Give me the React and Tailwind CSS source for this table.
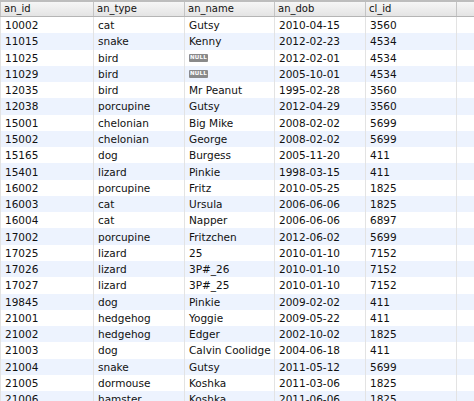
import React from 'react';

const rows = [
  ['10002', 'cat', 'Gutsy', '2010-04-15', '3560'],
  ['11015', 'snake', 'Kenny', '2012-02-23', '4534'],
  ['11025', 'bird', null, '2012-02-01', '4534'],
  ['11029', 'bird', null, '2005-10-01', '4534'],
  ['12035', 'bird', 'Mr Peanut', '1995-02-28', '3560'],
  ['12038', 'porcupine', 'Gutsy', '2012-04-29', '3560'],
  ['15001', 'chelonian', 'Big Mike', '2008-02-02', '5699'],
  ['15002', 'chelonian', 'George', '2008-02-02', '5699'],
  ['15165', 'dog', 'Burgess', '2005-11-20', '411'],
  ['15401', 'lizard', 'Pinkie', '1998-03-15', '411'],
  ['16002', 'porcupine', 'Fritz', '2010-05-25', '1825'],
  ['16003', 'cat', 'Ursula', '2006-06-06', '1825'],
  ['16004', 'cat', 'Napper', '2006-06-06', '6897'],
  ['17002', 'porcupine', 'Fritzchen', '2012-06-02', '5699'],
  ['17025', 'lizard', '25', '2010-01-10', '7152'],
  ['17026', 'lizard', '3P#_26', '2010-01-10', '7152'],
  ['17027', 'lizard', '3P#_25', '2010-01-10', '7152'],
  ['19845', 'dog', 'Pinkie', '2009-02-02', '411'],
  ['21001', 'hedgehog', 'Yoggie', '2009-05-22', '411'],
  ['21002', 'hedgehog', 'Edger', '2002-10-02', '1825'],
  ['21003', 'dog', 'Calvin Coolidge', '2004-06-18', '411'],
  ['21004', 'snake', 'Gutsy', '2011-05-12', '5699'],
  ['21005', 'dormouse', 'Koshka', '2011-03-06', '1825'],
  ['21006', 'hamster', 'Koshka', '2011-06-06', '1825'],
];

const headers = ['an_id', 'an_type', 'an_name', 'an_dob', 'cl_id'];
const cols = 'grid grid-cols-[1px_93px_91px_90px_91px_91px_1fr]';

function NullBadge() {
  return (
    <span className="inline-flex items-center justify-center h-[8px] w-[19px] rounded-[1px] bg-[#8a8a8a] text-white text-[5.5px] font-bold leading-none tracking-[0.2px]">
      NULL
    </span>
  );
}

export default function App() {
  return (
    <div className="w-[474px] h-[401px] overflow-hidden bg-white text-[#111] font-['DejaVu_Sans',sans-serif]">
      <div className="h-[2px] bg-[#bdbdbd]" />
      <div className={`${cols} h-[15px] bg-gradient-to-b from-[#f6f6f6] to-[#e4e4e4] border-b border-[#b5b5b5] text-[10px] leading-[14px]`}>
        <div className="border-r border-[#c4c4c4]" />
        {headers.map((h) => (
          <div key={h} className="pl-[3px] border-r border-[#c4c4c4]">{h}</div>
        ))}
        <div />
      </div>
      {rows.map((r, i) => (
        <div
          key={r[0]}
          className={`${cols} h-[16.27px] text-[10.5px] leading-[16px] ${i % 2 ? 'bg-[#edf3fe]' : 'bg-white'}`}
        >
          <div className="border-r border-[#e3e3e3]" />
          {r.map((c, j) => (
            <div key={j} className="pl-[4px] border-r border-[#e3e3e3] whitespace-nowrap overflow-hidden flex items-center">
              {c === null ? <NullBadge /> : c}
            </div>
          ))}
          <div />
        </div>
      ))}
    </div>
  );
}
